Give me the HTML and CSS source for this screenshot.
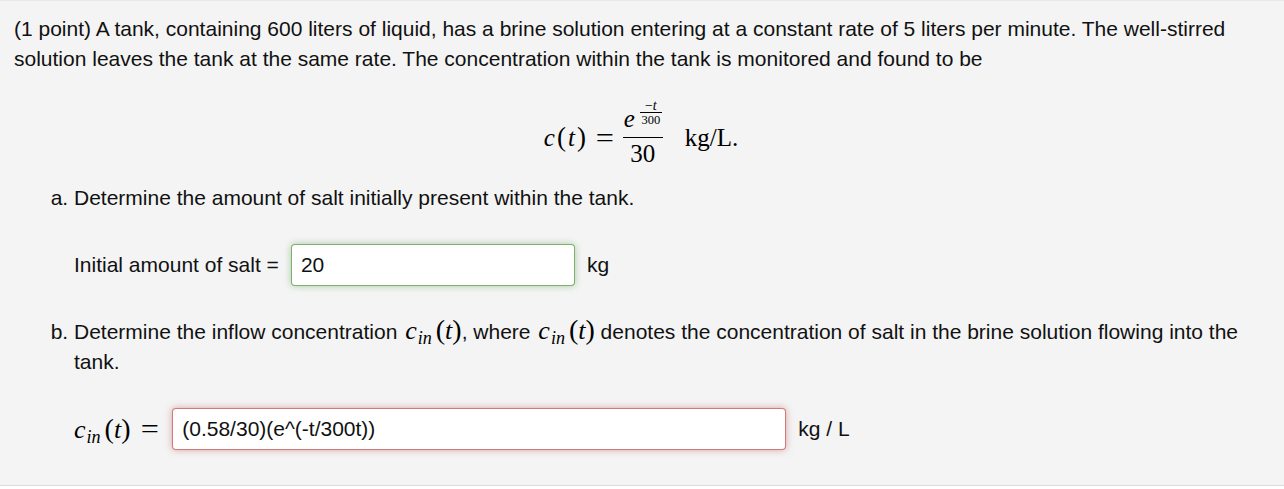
FILE: index.html
```html
<!DOCTYPE html>
<html lang="en">
<head>
<meta charset="utf-8">
<title>Brine tank problem</title>
<link rel="stylesheet" href="styles.css">
</head>
<body>
<div class="problem">
  <p class="intro">(1 point) A tank, containing 600 liters of liquid, has a brine solution entering at a constant rate of 5 liters per minute. The well-stirred solution leaves the tank at the same rate. The concentration within the tank is monitored and found to be</p>
  <div class="display-math">
    <span class="mrow lhs"><span class="mi">c</span><span class="mo">(</span><span class="mi">t</span><span class="mo">)</span></span>
    <span class="eq">=</span>
    <span class="frac">
      <span class="num">
        <span class="mi e">e</span>
        <span class="exp"><span class="exp-num">−<span class="mi">t</span></span><span class="exp-den">300</span></span>
      </span>
      <span class="den">30</span>
    </span>
    <span class="unit">kg/L.</span>
  </div>
  <ol class="parts">
    <li class="part">
      <p class="part-text">Determine the amount of salt initially present within the tank.</p>
      <div class="answer-row">
        <span class="label">Initial amount of salt =</span>
        <input class="ans correct" type="text" value="20">
        <span class="unit-text">kg</span>
      </div>
    </li>
    <li class="part">
      <p class="part-text">Determine the inflow concentration <span class="imath"><span class="mi">c</span><span class="sub">in</span><span class="paren">(</span><span class="mi">t</span><span class="paren">)</span></span>, where <span class="imath"><span class="mi">c</span><span class="sub">in</span><span class="paren">(</span><span class="mi">t</span><span class="paren">)</span></span> denotes the concentration of salt in the brine solution flowing into the tank.</p>
      <div class="answer-row">
        <span class="imath row-math"><span class="mi">c</span><span class="sub">in</span><span class="paren">(</span><span class="mi">t</span><span class="paren">)</span><span class="eq-inline">=</span></span>
        <input class="ans incorrect wide" type="text" value="(0.58/30)(e^(-t/300t))">
        <span class="unit-text">kg / L</span>
      </div>
    </li>
  </ol>
</div>
</body>
</html>
```

FILE: styles.css
```css
html, body {
  margin: 0;
  padding: 0;
  background: #ffffff;
}

.problem {
  background: #f4f4f4;
  border-top: 1px solid #e9e9e9;
  border-bottom: 1px solid #dcdcdc;
  padding: 13px 20px 35px 14px;
  font-family: "Liberation Sans", Arial, sans-serif;
  font-size: 21px;
  line-height: 30px;
  color: #111111;
}

.intro {
  margin: 0;
}

/* display math */
.display-math {
  height: 91px;
  padding-top: 18px;
  display: flex;
  justify-content: center;
  align-items: center;
  font-family: "Liberation Serif", "Times New Roman", serif;
  font-size: 25px;
  line-height: 25px;
  color: #000;
  padding-left: 4px;
}

.mi {
  font-style: italic;
}

.lhs {
  display: inline-flex;
  letter-spacing: 1px;
}

.lhs .mo {
  padding: 0 1px;
  font-size: 27px;
}

.eq {
  margin: 0 10px 0 9px;
  font-size: 28px;
  transform: scaleX(1.15);
}

.frac {
  display: inline-flex;
  flex-direction: column;
  align-items: stretch;
  width: 40px;
}

.num {
  height: 44px;
  display: flex;
  justify-content: flex-start;
  align-items: flex-end;
  padding-bottom: 6px;
  box-sizing: border-box;
  border-bottom: 1px solid #000;
}

.num .e {
  margin-left: 1px;
}

.exp {
  display: inline-flex;
  flex-direction: column;
  align-items: stretch;
  margin-left: 5px;
  margin-bottom: 4px;
  width: 22px;
}

.exp-num {
  font-size: 14px;
  line-height: 13px;
  text-align: center;
  border-bottom: 1px solid #000;
}

.exp-den {
  font-size: 12.5px;
  line-height: 14px;
  text-align: center;
}

.den {
  height: 44px;
  padding-top: 3px;
  box-sizing: border-box;
  text-align: center;
}

.unit {
  margin-left: 22px;
}

/* parts */
.parts {
  list-style: lower-alpha;
  margin: 0;
  padding-left: 60px;
}

.part + .part {
  margin-top: 31px;
}

.part-text {
  margin: 0;
}

.answer-row {
  display: flex;
  align-items: center;
  gap: 12px;
  margin-top: 31px;
  height: 42px;
}

.ans {
  box-sizing: border-box;
  height: 42px;
  width: 284px;
  padding: 0 9px;
  font-family: "Liberation Sans", Arial, sans-serif;
  font-size: 21px;
  color: #111;
  background: #ffffff;
  border-radius: 4px;
  border: 1px solid #ccc;
  outline: none;
}

.ans.wide {
  width: 614px;
  margin-left: 0;
}

.ans.correct {
  border-color: rgba(110, 170, 90, 0.9);
  box-shadow: 0 0 7px rgba(81, 153, 81, 0.45);
}

.ans.incorrect {
  border-color: rgba(200, 100, 95, 0.85);
  box-shadow: 0 0 7px rgba(191, 84, 84, 0.5);
}

/* inline math */
.imath {
  font-family: "Liberation Serif", "Times New Roman", serif;
  font-size: 26px;
  line-height: 20px;
  color: #000;
  white-space: nowrap;
  padding-left: 2px;
}

.imath .sub {
  font-style: italic;
  font-size: 18px;
  line-height: 0;
  vertical-align: -5px;
  margin-left: 1px;
  margin-right: 4px;
}

.imath .paren {
  font-size: 28px;
  line-height: 20px;
}

.row-math {
  padding-left: 0;
  line-height: 30px;
}

.eq-inline {
  display: inline-block;
  margin-left: 12px;
  margin-right: 2px;
  font-size: 28px;
  transform: scaleX(1.15);
}
```
